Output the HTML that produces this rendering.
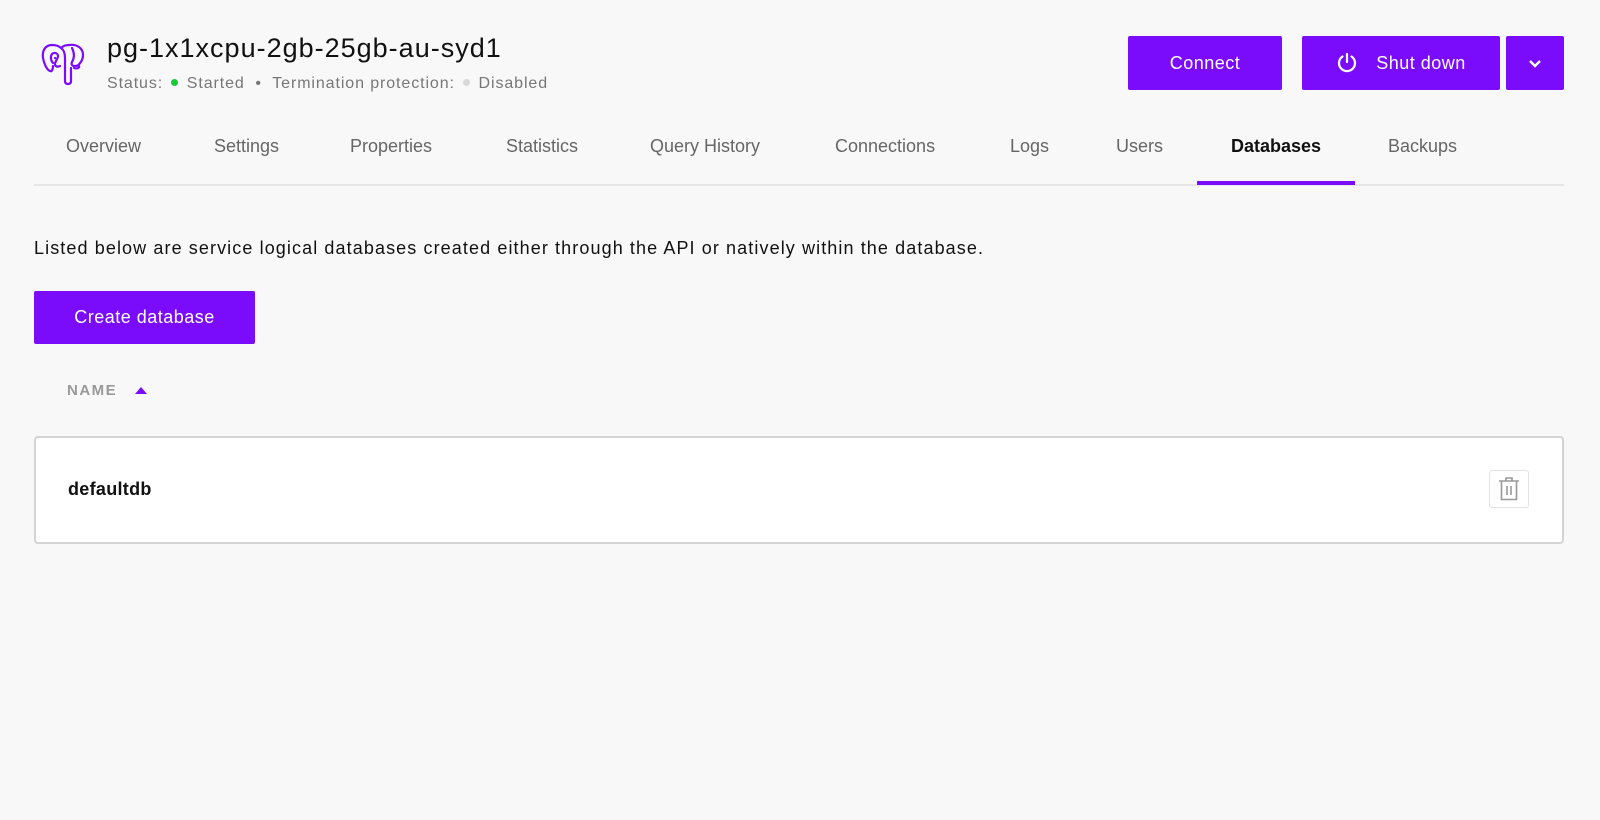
<!DOCTYPE html>
<html><head><style>
*{box-sizing:border-box;margin:0;padding:0}
body{width:1600px;height:820px;background:#f8f8f8;font-family:"Liberation Sans",sans-serif;position:relative;overflow:hidden;color:#111}
.a{position:absolute;white-space:nowrap}
.btn{position:absolute;background:#7b0cfb;color:#fff;border-radius:2px;font-size:18px;letter-spacing:0.5px;display:flex;align-items:center;justify-content:center}
.tab{position:absolute;top:136px;font-size:18px;color:#666}
</style></head><body>
<svg class="a" style="left:40px;top:41px" width="46" height="46" viewBox="0 0 46 46" fill="none" stroke="#7b0cfb" stroke-width="2.2" stroke-linecap="round" stroke-linejoin="round">
<path d="M12 4C5 4 2 10 3 17c1 6 4 12 7 13 2 1 3-2 3-5"/>
<path d="M12 4c4 0 7 1 9 3 2-2 5-3 8-3"/>
<path d="M29 4c8-1 14 3 14 10 0 5-3 9-6 11"/>
<path d="M13 22c-2-2-3-6-1-9 2-2 6-1 6 2 0 3-3 5-3 8 0 3 3 3 5 2"/>
<path d="M21 7c3 2 4 6 4 10v23c0 2 1 3 3 3s3-1 3-3V27"/>
<path d="M32 7c2 4 3 9 0 14-1 2 0 4 2 4 3 0 4-1 5 0 1 2-2 3-5 2"/>
<path d="M15 17h0.1"/>
</svg>
<div class="a" style="left:107px;top:33px;font-size:27px;letter-spacing:1px;color:#111">pg-1x1xcpu-2gb-25gb-au-syd1</div>
<div class="a" style="left:107px;top:75px;font-size:16px;letter-spacing:0.9px;color:#777">Status: <span style="display:inline-block;width:7px;height:7px;border-radius:50%;background:#1ac93a;vertical-align:2px;margin:0 3px"></span> Started &nbsp;•&nbsp; Termination protection: <span style="display:inline-block;width:7px;height:7px;border-radius:50%;background:#d8d8d8;vertical-align:2px;margin:0 3px"></span> Disabled</div>
<div class="btn" style="left:1128px;top:36px;width:154px;height:54px">Connect</div>
<div class="btn" style="left:1302px;top:36px;width:198px;height:54px"><svg width="22" height="22" viewBox="0 0 22 22" fill="none" stroke="#fff" stroke-width="2.2" stroke-linecap="round" style="margin-right:18px"><path d="M6.5 4.5a8 8 0 1 0 9 0"/><path d="M11 2v8"/></svg>Shut down</div>
<div class="btn" style="left:1506px;top:36px;width:58px;height:54px"><svg width="14" height="10" viewBox="0 0 14 10" fill="none" stroke="#fff" stroke-width="2.4"><path d="M2 3l5 5 5-5"/></svg></div>
<div class="tab" style="left:66px">Overview</div>
<div class="tab" style="left:214px">Settings</div>
<div class="tab" style="left:350px">Properties</div>
<div class="tab" style="left:506px">Statistics</div>
<div class="tab" style="left:650px">Query History</div>
<div class="tab" style="left:835px">Connections</div>
<div class="tab" style="left:1010px">Logs</div>
<div class="tab" style="left:1116px">Users</div>
<div class="tab" style="left:1231px;color:#111;font-weight:bold">Databases</div>
<div class="tab" style="left:1388px">Backups</div>
<div class="a" style="left:34px;top:184px;width:1530px;height:2px;background:#e6e6e6"></div>
<div class="a" style="left:1197px;top:181px;width:158px;height:4px;background:#7b0cfb"></div>
<div class="a" style="left:34px;top:238px;font-size:18px;letter-spacing:1.1px;color:#111">Listed below are service logical databases created either through the API or natively within the database.</div>
<div class="btn" style="left:34px;top:291px;width:221px;height:53px">Create database</div>
<div class="a" style="left:67px;top:382px;font-size:15px;font-weight:bold;color:#999;letter-spacing:1.5px">NAME</div>
<div class="a" style="left:135px;top:387px;width:0;height:0;border-left:6px solid transparent;border-right:6px solid transparent;border-bottom:7px solid #7b0cfb"></div>
<div class="a" style="left:34px;top:436px;width:1530px;height:108px;background:#fff;border:2px solid #d4d4d4;border-radius:4px"></div>
<div class="a" style="left:68px;top:479px;font-size:18px;font-weight:bold;letter-spacing:0.3px;color:#111">defaultdb</div>
<div class="a" style="left:1489px;top:470px;width:40px;height:38px;border:1px solid #e2e2e2;border-radius:3px;display:flex;align-items:center;justify-content:center">
<svg width="24" height="26" viewBox="0 0 24 26" fill="none" stroke="#999" stroke-width="1.6"><path d="M2 5h20M9 5V2h6v3M4.5 5v18.5h15V5M10 10v9M14 10v9"/></svg></div>
</body></html>
